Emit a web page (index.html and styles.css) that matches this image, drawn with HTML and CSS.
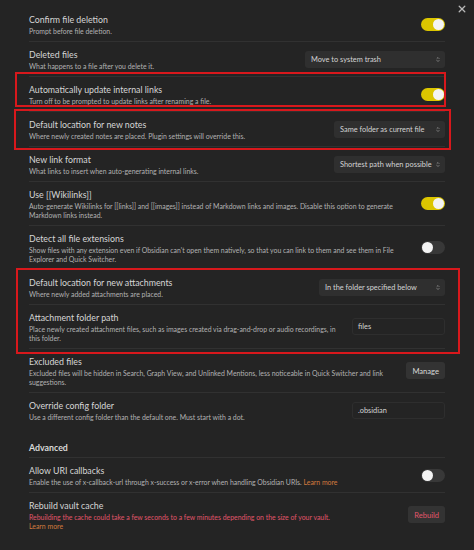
FILE: index.html
```html
<!DOCTYPE html>
<html lang="en">
<head>
<meta charset="utf-8">
<title>Files and links</title>
<link rel="stylesheet" href="styles.css">
</head>
<body>
<div class="modal">
  <button class="close" aria-label="Close">
    <svg viewBox="0 0 10 10" width="8" height="8"><path d="M1.5 1.5 L8.5 8.5 M8.5 1.5 L1.5 8.5" stroke="#b8b8b8" stroke-width="1.6" stroke-linecap="round"/></svg>
  </button>
  <div class="settings">
    <div class="item first">
      <div class="info"><div class="name">Confirm file deletion</div><div class="desc">Prompt before file deletion.</div></div>
      <div class="control"><span class="toggle on"></span></div>
    </div>
    <div class="item">
      <div class="info"><div class="name">Deleted files</div><div class="desc">What happens to a file after you delete it.</div></div>
      <div class="control"><span class="select w140">Move to system trash<svg class="chev" viewBox="0 0 6 10" width="4" height="7"><path d="M1 4 L3 2 L5 4 M1 6 L3 8 L5 6" fill="none" stroke="#9c9c9c" stroke-width="1.1"/></svg></span></div>
    </div>
    <div class="item">
      <div class="info"><div class="name">Automatically update internal links</div><div class="desc">Turn off to be prompted to update links after renaming a file.</div></div>
      <div class="control"><span class="toggle on"></span></div>
    </div>
    <div class="item">
      <div class="info"><div class="name">Default location for new notes</div><div class="desc">Where newly created notes are placed. Plugin settings will override this.</div></div>
      <div class="control"><span class="select w111">Same folder as current file<svg class="chev" viewBox="0 0 6 10" width="4" height="7"><path d="M1 4 L3 2 L5 4 M1 6 L3 8 L5 6" fill="none" stroke="#9c9c9c" stroke-width="1.1"/></svg></span></div>
    </div>
    <div class="item">
      <div class="info"><div class="name">New link format</div><div class="desc">What links to insert when auto-generating internal links.</div></div>
      <div class="control"><span class="select w111">Shortest path when possible<svg class="chev" viewBox="0 0 6 10" width="4" height="7"><path d="M1 4 L3 2 L5 4 M1 6 L3 8 L5 6" fill="none" stroke="#9c9c9c" stroke-width="1.1"/></svg></span></div>
    </div>
    <div class="item">
      <div class="info"><div class="name">Use [[Wikilinks]]</div><div class="desc">Auto-generate Wikilinks for [[links]] and [[images]] instead of Markdown links and images. Disable this option to generate<br>Markdown links instead.</div></div>
      <div class="control"><span class="toggle on"></span></div>
    </div>
    <div class="item">
      <div class="info"><div class="name">Detect all file extensions</div><div class="desc">Show files with any extension even if Obsidian can't open them natively, so that you can link to them and see them in File<br>Explorer and Quick Switcher.</div></div>
      <div class="control"><span class="toggle"></span></div>
    </div>
    <div class="item">
      <div class="info"><div class="name">Default location for new attachments</div><div class="desc">Where newly added attachments are placed.</div></div>
      <div class="control"><span class="select w126">In the folder specified below<svg class="chev" viewBox="0 0 6 10" width="4" height="7"><path d="M1 4 L3 2 L5 4 M1 6 L3 8 L5 6" fill="none" stroke="#9c9c9c" stroke-width="1.1"/></svg></span></div>
    </div>
    <div class="item">
      <div class="info"><div class="name">Attachment folder path</div><div class="desc">Place newly created attachment files, such as images created via drag-and-drop or audio recordings, in<br>this folder.</div></div>
      <div class="control"><span class="input">files</span></div>
    </div>
    <div class="item">
      <div class="info"><div class="name">Excluded files</div><div class="desc">Excluded files will be hidden in Search, Graph View, and Unlinked Mentions, less noticeable in Quick Switcher and link<br>suggestions.</div></div>
      <div class="control"><button class="btn">Manage</button></div>
    </div>
    <div class="item">
      <div class="info"><div class="name">Override config folder</div><div class="desc">Use a different config folder than the default one. Must start with a dot.</div></div>
      <div class="control"><span class="input">.obsidian</span></div>
    </div>
    <div class="heading">Advanced</div>
    <div class="item">
      <div class="info"><div class="name">Allow URI callbacks</div><div class="desc">Enable the use of x-callback-url through x-success or x-error when handling Obsidian URIs. <a class="link">Learn more</a></div></div>
      <div class="control"><span class="toggle"></span></div>
    </div>
    <div class="item">
      <div class="info"><div class="name">Rebuild vault cache</div><div class="desc error">Rebuilding the cache could take a few seconds to a few minutes depending on the size of your vault.<br><a class="link">Learn more</a></div></div>
      <div class="control"><button class="btn danger">Rebuild</button></div>
    </div>
  </div>
  <div class="mark mark-a"></div>
  <div class="mark mark-b"></div>
  <div class="mark mark-c"></div>
</div>
</body>
</html>
```
FILE: styles.css
```css
html, body {
  margin: 0;
  padding: 0;
  background: #242424;
}
body {
  font-family: Lato, "Noto Sans", sans-serif;
  color: #dadada;
  width: 474px;
  height: 550px;
  overflow: hidden;
}
.modal {
  position: relative;
  width: 474px;
  height: 550px;
  background: #242424;
}
.close {
  position: absolute;
  top: 2px;
  right: 5px;
  width: 14px;
  height: 14px;
  padding: 0;
  border: 0;
  background: transparent;
  display: flex;
  align-items: center;
  justify-content: center;
}
.settings {
  padding: 7px 29px 0 29px;
  display: flex;
  flex-direction: column;
}
.item {
  display: flex;
  align-items: center;
  justify-content: space-between;
  padding: 5px 0;
  border-top: 1px solid #313131;
}
.item.first {
  border-top: 0;
}
.info {
  flex: 1 1 auto;
  min-width: 0;
  margin-right: 10px;
}
.name {
  font-size: 8.8px;
  line-height: 15px;
  color: #d6d6d6;
}
.desc {
  font-size: 6.9px;
  line-height: 9px;
  color: #b2b2b2;
  white-space: nowrap;
}
.desc.error {
  color: #e0556a;
}
.link {
  color: #d27a3e;
}
.control {
  flex: 0 0 auto;
  display: flex;
  align-items: center;
}
.toggle {
  display: block;
  position: relative;
  width: 24px;
  height: 13px;
  border-radius: 7px;
  background: #383838;
}
.toggle::after {
  content: "";
  position: absolute;
  top: 1px;
  left: 1px;
  width: 11px;
  height: 11px;
  border-radius: 50%;
  background: #f4f4f4;
}
.toggle.on {
  background: #dcc600;
}
.toggle.on::after {
  left: 12px;
}
.select {
  display: flex;
  align-items: center;
  justify-content: space-between;
  box-sizing: border-box;
  height: 17px;
  padding: 0 5px 0 6px;
  border-radius: 3px;
  background: #2f2f2f;
  font-size: 7.4px;
  color: #d4d4d4;
  white-space: nowrap;
}
.chev {
  flex: 0 0 auto;
  margin-left: 4px;
}
.w140 { width: 140px; }
.w111 { width: 111px; }
.w126 { width: 126px; }
.input {
  display: flex;
  align-items: center;
  box-sizing: border-box;
  width: 93px;
  height: 17px;
  padding: 0 5px;
  border: 1px solid #2e2e2e;
  border-radius: 3px;
  background: #242424;
  font-size: 7.4px;
  color: #d4d4d4;
}
.btn {
  box-sizing: border-box;
  height: 17px;
  padding: 0 6px;
  border: 0;
  border-radius: 3px;
  background: #333333;
  font-family: inherit;
  font-size: 7.6px;
  color: #d8d8d8;
}
.btn.danger {
  color: #e0556a;
}
.heading {
  font-size: 8.8px;
  font-weight: 700;
  line-height: 15px;
  padding: 13px 0 2px;
  color: #d8d8d8;
}
.mark {
  position: absolute;
  border: 2px solid #d8181c;
  box-sizing: border-box;
  pointer-events: none;
}
.mark-a { left: 15px; top: 72px; width: 431px; height: 35px; }
.mark-b { left: 14px; top: 109px; width: 437px; height: 41px; }
.mark-c { left: 16px; top: 268px; width: 444px; height: 86px; }
```
